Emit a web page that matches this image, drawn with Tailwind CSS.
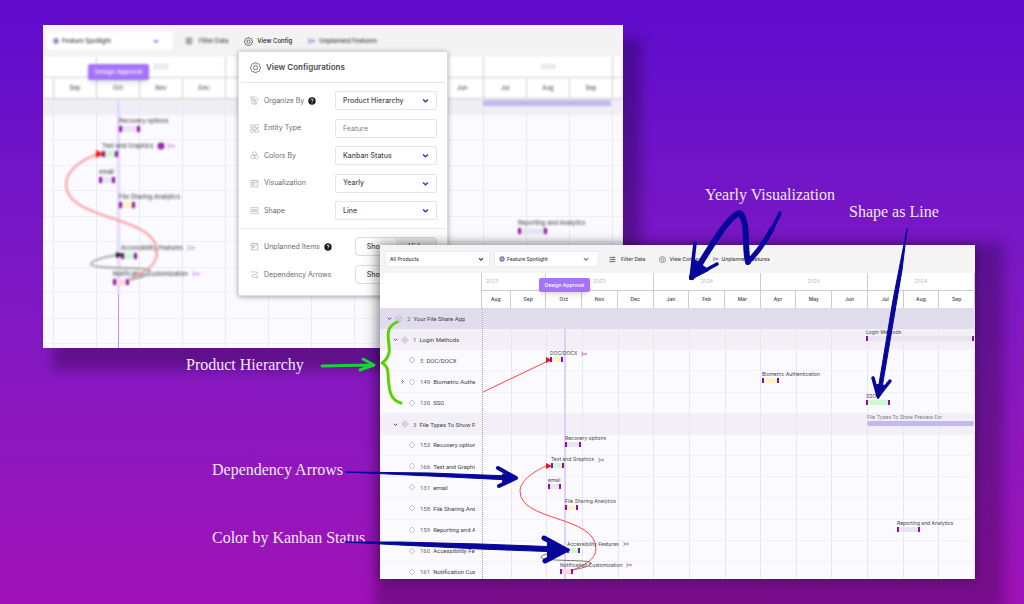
<!DOCTYPE html>
<html lang="en">
<head>
    <meta charset="UTF-8">
    <meta name="viewport" content="width=device-width, initial-scale=1.0">
    <title>Roadmap View Configurations</title>
    <script src="https://cdn.jsdelivr.net/npm/@tailwindcss/browser@4"></script>
</head>
<body class="font-['Inter','Liberation_Sans',sans-serif] text-[#3c3c44]">

<!-- Shared icons -->
<svg class="hidden" aria-hidden="true">
    <symbol id="chevron" viewBox="0 0 10 10"><path d="M1.5 3.5 5 6.8 8.5 3.5" fill="none" stroke="currentColor" stroke-width="2"/></symbol>
    <symbol id="gear" viewBox="0 0 24 24"><g fill="none" stroke="currentColor" stroke-width="1.6"><path d="M9.5 3.5 10.300 1.500h3.400l.8 2 2.200.9 2-.9 2.400 2.400-.9 2 .9 2.200 2 .8v3.400l-2 .8-.9 2 .9 2-2.400 2.400-2-.9-2.200.9-.8 2h-3.400l-.8-2-2.200-.9-2 .9-2.400-2.400.9-2-.9-2-2-.8v-3.400l2-.8.9-2.200-.9-2 2.400-2.400 2 .9z" stroke-linejoin="round"/><circle cx="12" cy="12.500" r="4.500"/></g></symbol>
    <symbol id="sliders" viewBox="0 0 24 24"><path d="M2 5h11M18 5h4M2 12h3M10 12h12M2 19h9M16 19h6M15.500 2v6M7.500 9v6M13.500 16v6" fill="none" stroke="currentColor" stroke-width="2.600"/></symbol>
    <symbol id="unplanned" viewBox="0 0 24 24"><path d="M3 3v18M3 12h17M10 7l4 5-4 5M17 8l4 4-4 4" fill="none" stroke="currentColor" stroke-width="2.200"/></symbol>
    <symbol id="link" viewBox="0 0 24 24"><path d="M2 3l6 9-6 9M8 12h13M17 7l5 5-5 5" fill="none" stroke="currentColor" stroke-width="2.500"/></symbol>
    <symbol id="globe" viewBox="0 0 24 24"><path d="M12 2a10 10 0 1 0 0 20 10 10 0 0 0 0-20M2 12h20M12 2v20M5 5q7 5 14 0M5 19q7-5 14 0M8 3q-4 9 0 18M16 3q4 9 0 18" fill="none" stroke="currentColor" stroke-width="2"/></symbol>
    <symbol id="cube" viewBox="0 0 24 24"><path d="M12 2l9 5v10l-9 5-9-5V7zM3 7l9 5 9-5M12 12v10" fill="none" stroke="currentColor" stroke-width="1.800"/></symbol>
    <symbol id="module" viewBox="0 0 24 24"><path d="M12 2l4 4-4 4-4-4zM12 14l4 4-4 4-4-4zM6 8l4 4-4 4-4-4zM18 8l4 4-4 4-4-4z" fill="none" stroke="currentColor" stroke-width="2"/></symbol>
    <symbol id="diamond" viewBox="0 0 24 24"><path d="M12 3l9 9-9 9-9-9z" fill="none" stroke="currentColor" stroke-width="2"/></symbol>
    <symbol id="organize" viewBox="0 0 24 24"><path d="M2 2h10v5H2zM5 7v14h8M5 13h6M11 10h4v5h-4zM13 18h4v4h-4zM16 4q5 1 5 6t-3 8" fill="none" stroke="currentColor" stroke-width="1.700"/></symbol>
    <symbol id="entity" viewBox="0 0 24 24"><path d="M2 2h8v8H2zM14 2h8v8h-8zM2 14h8v8H2zM14 14h8v8h-8zM10 6h4M10 18h4M6 10v4M18 10v4" fill="none" stroke="currentColor" stroke-width="1.700"/></symbol>
    <symbol id="colors" viewBox="0 0 24 24"><g fill="none" stroke="currentColor" stroke-width="1.700"><circle cx="12" cy="7.500" r="5.500"/><circle cx="7.500" cy="15.500" r="5.500"/><circle cx="16.500" cy="15.500" r="5.500"/></g></symbol>
    <symbol id="calendar" viewBox="0 0 24 24"><path d="M3 4h18v17H3zM3 8.500h18M8 1.500V5M16 1.500V5M7 12h4v4H7z" fill="none" stroke="currentColor" stroke-width="1.900"/></symbol>
    <symbol id="shape" viewBox="0 0 24 24"><path d="M2 4h20v5H2zM2 15h20v5H2zM2 12h20" fill="none" stroke="currentColor" stroke-width="1.500"/></symbol>
    <symbol id="depend" viewBox="0 0 24 24"><path d="M5 5h11q4 0 4 3.500T16 12H9q-4 0-4 3.500T9 19h11M17 15.500l4 3.500-4 3.500M3 3v4" fill="none" stroke="currentColor" stroke-width="1.800"/></symbol>
    <symbol id="help" viewBox="0 0 24 24"><circle cx="12" cy="12" r="11" fill="#17171c"/><path d="M8.500 9.500q0-3.500 3.500-3.500t3.500 3q0 2-2 3t-1.500 2.500M12 16.500v2.500" fill="none" stroke="#fff" stroke-width="2.400"/></symbol>
</svg>

<main class="relative min-h-screen w-full overflow-hidden bg-linear-to-b from-[#5f09cd] to-[#a011b8]">

    <!-- Back window -->
    <section class="absolute left-[43px] top-[25px] h-[323px] w-[580px] bg-[#fbfaff] text-[6px] leading-[8px] shadow-[14px_18px_12px_4px_rgba(0,0,0,0.28)]">
        <div class="flex h-full flex-col overflow-hidden">
            <div class="flex h-8 shrink-0 items-center bg-[#f3f3f3] pl-1">
                <div class="relative h-[18px] w-[126px] blur-[1px]">
                    <svg class="absolute left-[6px] top-[6px] size-[6px] text-[#5b45a8]"><use href="#globe"/></svg>
                    <select aria-label="Saved view" class="h-full w-full appearance-none rounded-xs bg-white pl-[15px] font-medium"><option>Feature Spotlight</option></select>
                    <svg class="absolute right-[14px] top-[6px] size-[6px] text-[#7a4fc9]"><use href="#chevron"/></svg>
                </div>
                <button class="ml-3 flex items-center gap-[6px] font-medium blur-[1px]"><svg class="size-2"><use href="#sliders"/></svg>Filter Data</button>
                <button class="ml-4 flex items-center gap-1 font-medium text-[#222]"><svg class="size-[9px]"><use href="#gear"/></svg>View Config</button>
                <button class="ml-4 flex items-center gap-[3px] font-medium blur-[1px]"><svg class="size-2 text-[#7a4fc9]"><use href="#unplanned"/></svg>Unplanned Features</button>
            </div>
            <div class="relative min-h-0 flex-1">
                <div class="bg-white blur-[1px]">
                    <div class="grid h-[21px] grid-cols-[54fr_129fr_129fr_129fr_129fr_10fr] items-stretch border-b border-[#ccc] text-[#b5b8c4] *:grid *:place-items-center *:border-r *:border-[#ccc]">
                        <div></div><div>2023</div><div></div><div></div><div>2024</div><div></div>
                    </div>
                    <div id="back-months" class="grid h-[21px] grid-cols-[11fr_repeat(13,43fr)_10fr] border-b border-[#ccc] *:grid *:place-items-center *:border-r *:border-[#ccc]"></div>
                    <div class="h-4 bg-[#f0eef5]"></div>
                </div>
                <div class="relative h-[229px]">
                    <div id="back-rows" class="grid h-full grid-rows-[repeat(9,1fr)] *:border-b *:border-[#f1eff6]"></div>
                    <div id="back-lines" class="absolute inset-x-0 -top-4 bottom-[-4px] grid grid-cols-[11fr_repeat(13,43fr)_10fr] *:border-r *:border-[#ebeaf2]"></div>
                    <div class="absolute -top-4 left-[74px] h-[195px] w-[3px] bg-[#e2d8fb] blur-[1px]"></div>
                    <div class="absolute bottom-[-4px] left-[75px] top-[179px] w-px bg-[#b492f7]"></div>
                    <div class="absolute -top-[15px] left-[440px] h-[6px] w-[128px] bg-[#c2b9ee] blur-[1px]"></div>
                    <div class="absolute inset-0 blur-[1px]">
                        <div id="back-tasks" class="absolute inset-0 text-[#333]"></div>
                        <svg class="absolute inset-0 h-full w-full" viewBox="43 115 580 229" fill="none">
                            <path d="M99 154C84 158 66 170 66 184C66 222 157 214 157 252C157 268 140 274 128 280" stroke="#fa9a9a" stroke-width="2"/>
                            <path d="M96 150l8 4-8 4z" fill="#f01616"/>
                            <path d="M118 255C103 257 91 261 91 264C91 270 150 266 150 271C150 276 136 278 129 280" stroke="#aaa" stroke-width="2"/>
                            <path d="M116 252l8 3-8 3z" fill="#222"/>
                            <circle cx="161" cy="146" r="3.500" fill="#9526ad"/>
                        </svg>
                    </div>
                </div>
                <div class="absolute left-[45px] top-[7px] h-4 w-[61px] rounded-xs bg-[#a572fb] text-center leading-4 font-medium text-white shadow-md blur-[1px]">Design Approval</div>
            </div>
        </div>

        <!-- View configurations dialog -->
        <form class="absolute left-[195px] top-[26px] w-[210px] rounded-xs border border-[#ddd] bg-white pb-[11px] text-[7px] leading-[10px] text-[#666a75] shadow-[0_1px_5px_rgba(0,0,0,0.35)]">
            <h2 class="mx-[2px] flex h-[31px] items-center gap-[5px] border-b border-[#e6e6ea] pl-[9px] text-[8px] font-semibold text-[#4b4b52]"><svg class="size-[11px]"><use href="#gear"/></svg>View Configurations</h2>
            <div class="mx-[2px] flex h-[146px] flex-col justify-between border-b border-[#e6e6ea] py-2 pl-[9px] pr-2">
                <div class="flex h-[19px] items-center">
                    <svg class="mr-[5px] size-[9px] text-[#aeb0b8]"><use href="#organize"/></svg>
                    <label for="organize-by">Organize By</label><svg class="ml-1 size-2"><use href="#help"/></svg>
                    <div class="relative ml-auto h-full w-[102px]">
                        <select id="organize-by" class="h-full w-full appearance-none rounded-xs border border-[#e3e3e8] pl-[7px] font-medium text-[#4b4b52]"><option>Product Hierarchy</option></select>
                        <svg class="absolute right-2 top-[6px] size-[7px] text-[#5a1fb4]"><use href="#chevron"/></svg>
                    </div>
                </div>
                <div class="flex h-[19px] items-center">
                    <svg class="mr-[5px] size-[9px] text-[#aeb0b8]"><use href="#entity"/></svg>
                    <label for="entity-type">Entity Type</label>
                    <input id="entity-type" type="text" value="Feature" readonly class="ml-auto h-full w-[102px] rounded-xs border border-[#e3e3e8] pl-[7px] text-[#808088]">
                </div>
                <div class="flex h-[19px] items-center">
                    <svg class="mr-[5px] size-[9px] text-[#aeb0b8]"><use href="#colors"/></svg>
                    <label for="colors-by">Colors By</label>
                    <div class="relative ml-auto h-full w-[102px]">
                        <select id="colors-by" class="h-full w-full appearance-none rounded-xs border border-[#e3e3e8] pl-[7px] font-medium text-[#4b4b52]"><option>Kanban Status</option></select>
                        <svg class="absolute right-2 top-[6px] size-[7px] text-[#5a1fb4]"><use href="#chevron"/></svg>
                    </div>
                </div>
                <div class="flex h-[19px] items-center">
                    <svg class="mr-[5px] size-[9px] text-[#aeb0b8]"><use href="#calendar"/></svg>
                    <label for="visualization">Visualization</label>
                    <div class="relative ml-auto h-full w-[102px]">
                        <select id="visualization" class="h-full w-full appearance-none rounded-xs border border-[#e3e3e8] pl-[7px] font-medium text-[#4b4b52]"><option>Yearly</option></select>
                        <svg class="absolute right-2 top-[6px] size-[7px] text-[#5a1fb4]"><use href="#chevron"/></svg>
                    </div>
                </div>
                <div class="flex h-[19px] items-center">
                    <svg class="mr-[5px] size-[9px] text-[#aeb0b8]"><use href="#shape"/></svg>
                    <label for="shape-by">Shape</label>
                    <div class="relative ml-auto h-full w-[102px]">
                        <select id="shape-by" class="h-full w-full appearance-none rounded-xs border border-[#e3e3e8] pl-[7px] font-medium text-[#4b4b52]"><option>Line</option></select>
                        <svg class="absolute right-2 top-[6px] size-[7px] text-[#5a1fb4]"><use href="#chevron"/></svg>
                    </div>
                </div>
            </div>
            <div class="flex flex-col gap-[9px] pl-[11px] pr-[10px] pt-2">
                <div class="flex h-[19px] items-center">
                    <svg class="mr-[5px] size-[9px] text-[#aeb0b8]"><use href="#calendar"/></svg>
                    <span>Unplanned Items</span><svg class="ml-1 size-2"><use href="#help"/></svg>
                    <div class="ml-auto grid h-full w-[82px] grid-cols-2 rounded-sm border border-[#ddd] bg-[#ededed] font-medium text-[#444]">
                        <button type="button" class="rounded-sm bg-white">Show</button><button type="button">Hide</button>
                    </div>
                </div>
                <div class="flex h-[19px] items-center">
                    <svg class="mr-[5px] size-[9px] text-[#aeb0b8]"><use href="#depend"/></svg>
                    <span>Dependency Arrows</span>
                    <div class="ml-auto grid h-full w-[82px] grid-cols-2 rounded-sm border border-[#ddd] bg-[#ededed] font-medium text-[#444]">
                        <button type="button" class="rounded-sm bg-white">Show</button><button type="button">Hide</button>
                    </div>
                </div>
            </div>
        </form>
    </section>

    <!-- Front window -->
    <section class="absolute left-[380px] top-[245px] h-[334px] w-[595px] bg-[#fbfaff] text-[5px] leading-[7px] shadow-[12px_15px_12px_17px_rgba(0,0,0,0.26),0_0_10px_rgba(0,0,0,0.3)]">
        <div class="flex h-full flex-col overflow-hidden">
            <div class="flex h-7 shrink-0 items-center bg-[#f4f4f4] pl-[5px] font-medium">
                <div class="relative h-4 w-[105px]">
                    <select aria-label="Product" class="h-full w-full appearance-none border border-[#ececec] bg-white pl-1 font-medium"><option>All Products</option></select>
                    <svg class="absolute right-[6px] top-[5px] size-[6px] text-[#5a1fb4]"><use href="#chevron"/></svg>
                </div>
                <div class="relative ml-1 h-4 w-[105px]">
                    <svg class="absolute left-[5px] top-[5px] size-[6px] text-[#5b45a8]"><use href="#globe"/></svg>
                    <select aria-label="Saved view" class="h-full w-full appearance-none border border-[#ececec] bg-white pl-3 font-medium"><option>Feature Spotlight</option></select>
                    <svg class="absolute right-[10px] top-[5px] size-[6px] text-[#8a62cf]"><use href="#chevron"/></svg>
                </div>
                <button class="ml-[10px] flex items-center gap-[5px]"><svg class="size-[7px]"><use href="#sliders"/></svg>Filter Data</button>
                <button class="ml-[14px] flex items-center gap-[3px]"><svg class="size-[7px]"><use href="#gear"/></svg>View Config</button>
                <button class="ml-[14px] flex items-center gap-[3px]"><svg class="size-[6px] text-[#7a3fc9]"><use href="#unplanned"/></svg>Unplanned Features</button>
            </div>
            <div class="grid h-[35px] shrink-0 grid-cols-[102px_1fr] bg-white">
                <div class="border-r border-[#ccc]"></div>
                <div class="relative grid grid-rows-2">
                    <div class="grid grid-cols-[29fr_repeat(13,36fr)] border-b border-[#ccc] text-[#b5b8c4] *:flex *:items-center *:border-r *:border-[#ccc]">
                        <div class="col-span-2 pl-[4px]">2023</div><div class="col-span-3 justify-center">2023</div><div class="col-span-3 justify-center">2024</div><div class="col-span-3 justify-center">2024</div><div class="col-span-3 justify-center">2024</div>
                    </div>
                    <div id="front-months" class="grid grid-cols-[29fr_repeat(13,36fr)] font-medium *:grid *:place-items-center *:border-r *:border-[#ccc]"></div>
                    <div class="absolute left-[57px] top-[5px] h-[14px] w-[51px] rounded-xs bg-[#a572fb] text-center leading-[14px] font-medium text-white shadow-md">Design Approval</div>
                </div>
            </div>
            <div class="relative grid h-[275px] shrink-0 grid-cols-[102px_1fr]">
                <ul id="tree" class="grid grid-rows-[repeat(13,1fr)] font-['Roboto','Inter',sans-serif] text-[6px]"></ul>
                <div class="relative border-l border-dotted border-[#9d9ba8]">
                    <div id="front-rows" class="grid h-full grid-rows-[repeat(13,1fr)]"></div>
                    <div id="front-lines" class="absolute inset-x-0 bottom-0 top-[21px] grid grid-cols-[29fr_repeat(13,36fr)] *:border-r *:border-[#e9e7f0]"></div>
                    <div class="absolute bottom-0 left-[81px] top-[21px] w-[2px] bg-[#ddd0fb]"></div>
                    <svg class="absolute inset-0 h-full w-full" viewBox="483 308 492 275" fill="none">
                        <path d="M483 392 548 361M549 465C535 470 520 481 520 491C520 522 596 515 596 549C596 560 582 566 573 570" stroke="#f44" stroke-width="1"/>
                        <path d="M546 357l6 3-6 3zM546 463l6 3-6 3z" fill="#f01616"/>
                        <path d="M564 551C552 552 541 555 541 557C541 562 591 559 591 563C591 567 580 568 573 570" stroke="#777" stroke-width="1"/>
                    </svg>
                    <div id="front-tasks" class="absolute inset-0 text-[#444]"></div>
                </div>
            </div>
        </div>
    </section>

    <!-- Callouts -->
    <div class="font-['Liberation_Serif',serif] text-base leading-5 font-medium text-[#f0e8fa]">
        <p class="absolute left-[186px] top-[355px]">Product Hierarchy</p>
        <p class="absolute left-[212px] top-[460px]">Dependency Arrows</p>
        <p class="absolute left-[212px] top-[528px]">Color by Kanban Status</p>
        <p class="absolute left-[705px] top-[185px]">Yearly Visualization</p>
        <p class="absolute left-[849px] top-[202px]">Shape as Line</p>
    </div>
    <svg class="pointer-events-none absolute left-0 top-0" width="1024" height="604" viewBox="0 0 1024 604" fill="none" stroke-linecap="round" stroke-linejoin="round">
        <g stroke="#06069b">
            <path d="M780 213Q774 227 764 242" stroke-width="3.500"/>
            <path d="M772 229Q761 249 748 262" stroke-width="5"/>
            <path d="M748 262C744 249 749 223 740 213C729 215 711 246 692 277" stroke-width="6"/>
            <path d="M695 243 691 278M717 264 691 278" stroke-width="3.500"/>
            <path d="M694 260 690 279 708 270z" fill="#06069b" stroke-width="2"/>
            <path d="M907 229 902 270 882 388 878 390 893 300z" fill="#06069b" stroke-width="1"/>
            <path d="M873 378 878 396 890 381" stroke-width="3.500"/>
            <path d="M877 385 878 398 886 386z" fill="#06069b" stroke-width="2"/>
            <path d="M346 472 430 473 510 476 510 480 430 476z" fill="#06069b" stroke-width="1"/>
            <path d="M498 468 516 478 499 486" stroke-width="4"/>
            <path d="M503 474 517 478 503 482z" fill="#06069b" stroke-width="1"/>
            <path d="M345 542 400 542 480 544 560 547 560 552 480 549 400 545z" fill="#06069b" stroke-width="1"/>
            <path d="M544 538 566 550 545 561" stroke-width="5"/>
            <path d="M548 541 569 550 548 557z" fill="#06069b" stroke-width="2"/>
        </g>
        <path d="M322 366 371 365M363 359 374 365 360 370" stroke="#15d636" stroke-width="3"/>
        <path d="M397 322C382 329 391 342 389 353Q387 360 382 363Q388 366 388 374C389 391 390 400 401 403" stroke="#5ccf05" stroke-width="3"/>
    </svg>
</main>

<script>
    const colors = { grey: '#e8e5f1', green: '#cdfbd2', yellow: '#fff3c4', red: '#ffdada' };

    const months = ['Aug', 'Sep', 'Oct', 'Nov', 'Dec', 'Jan', 'Feb', 'Mar', 'Apr', 'May', 'Jun', 'Jul', 'Aug', 'Sep'];
    const cells = (list) => list.map(m => `<div>${m}</div>`).join('');
    const fill = (id, html) => { document.getElementById(id).innerHTML = html; };

    fill('front-months', cells(months));
    fill('front-lines', cells(months.map(() => '')));
    fill('back-months', cells(['', ...months.slice(1), '']));
    fill('back-lines', cells(Array(15).fill('')));
    fill('back-rows', cells(Array(9).fill('')));

    // [level, expander, id, name]
    const items = [
        [0, 'open', 2, 'Your File Share App'],
        [1, 'open', 1, 'Login Methods'],
        [2, '', 5, 'DOC/DOCX'],
        [2, 'closed', 149, 'Biometric Authentication'],
        [2, '', 130, 'SSO'],
        [1, 'open', 3, 'File Types To Show Preview For'],
        [2, '', 153, 'Recovery options'],
        [2, '', 166, 'Text and Graphics'],
        [2, '', 131, 'email'],
        [2, '', 158, 'File Sharing Analytics'],
        [2, '', 159, 'Reporting and Analytics'],
        [2, '', 160, 'Accessibility Features'],
        [2, '', 161, 'Notification Customization']
    ];
    const indent = ['pl-[7px] bg-[#e1dcec]', 'pl-[13px] bg-[#f2f0f6]', 'pl-[20px] border-b border-[#f3f1f8]'];
    const rowBg = ['bg-[#e1dcec]', 'bg-[#f2f0f6]', 'border-b border-[#f3f1f8]'];
    const icon = ['cube', 'module', 'diamond'];
    const expander = { open: '', closed: '-rotate-90', '': 'invisible' };

    fill('tree', items.map(([level, state, id, name]) => `
        <li class="flex items-center gap-[3px] overflow-hidden pr-[7px] ${indent[level]}">
            <svg class="size-[5px] shrink-0 text-[#6a35bd] ${expander[state]}"><use href="#chevron"/></svg>
            <svg class="size-2 shrink-0 text-[#a9a7b4]"><use href="#${icon[level]}"/></svg>
            <span class="ml-px text-[#66646f]">${id}</span>
            <span class="overflow-hidden whitespace-nowrap">${name}</span>
        </li>`).join(''));
    fill('front-rows', items.map(([level]) => `<div class="${rowBg[level]}"></div>`).join(''));

    // [row, start, width, color, name, linked]
    const frontTasks = [
        [1, 383, 108, 'grey', 'Login Methods'],
        [2, 67, 13, 'yellow', 'DOC/DOCX', true],
        [3, 279, 17, 'yellow', 'Biometric Authentication'],
        [4, 383, 24, 'green', 'SSO'],
        [6, 82, 16, 'grey', 'Recovery options'],
        [7, 68, 13, 'green', 'Text and Graphics', true],
        [8, 65, 13, 'grey', 'email'],
        [9, 82, 13, 'yellow', 'File Sharing Analytics'],
        [10, 414, 23, 'grey', 'Reporting and Analytics'],
        [11, 84, 13, 'green', 'Accessibility Features', true],
        [12, 77, 13, 'red', 'Notification Customization', true]
    ];
    fill('front-tasks', frontTasks.map(([row, start, width, color, name, linked]) => `
        <div class="absolute" style="left:${start}px;top:${row / 13 * 100}%">
            <div class="flex items-center gap-1 whitespace-nowrap">${name}${linked ? '<svg class="size-[6px] text-[#9526ad]"><use href="#link"/></svg>' : ''}</div>
            <div class="h-[5px] border-x-2 border-[#8f0fa6]" style="width:${width}px;background:${colors[color]}"></div>
        </div>`).join('') + `
        <div class="absolute" style="left:384px;top:${5 / 13 * 100}%">
            <div class="whitespace-nowrap text-[#77757f]">File Types To Show Preview For</div>
            <div class="h-[5px] w-[107px] rounded-xs bg-[#c2b9ee]"></div>
        </div>`);

    const backTasks = [
        [0, 76, 21, 'grey', 'Recovery options'],
        [1, 59, 16, 'green', 'Text and Graphics', 'ml-[14px]'],
        [2, 56, 16, 'grey', 'email'],
        [3, 76, 16, 'yellow', 'File Sharing Analytics'],
        [4, 475, 29, 'grey', 'Reporting and Analytics'],
        [5, 78, 16, 'green', 'Accessibility Features', 'ml-1'],
        [6, 70, 16, 'red', 'Notification Customization', 'ml-1']
    ];
    fill('back-tasks', backTasks.map(([row, start, width, color, name, gap]) => `
        <div class="absolute" style="left:${start}px;top:${row / 9 * 100}%">
            <div class="flex items-center whitespace-nowrap pt-[2px]">${name}${gap ? `<svg class="size-2 text-[#b66fd0] ${gap}"><use href="#link"/></svg>` : ''}</div>
            <div class="mt-px h-[6px] border-x-3 border-[#8f0fa6]" style="width:${width}px;background:${colors[color]}"></div>
        </div>`).join(''));
</script>
</body>
</html>
